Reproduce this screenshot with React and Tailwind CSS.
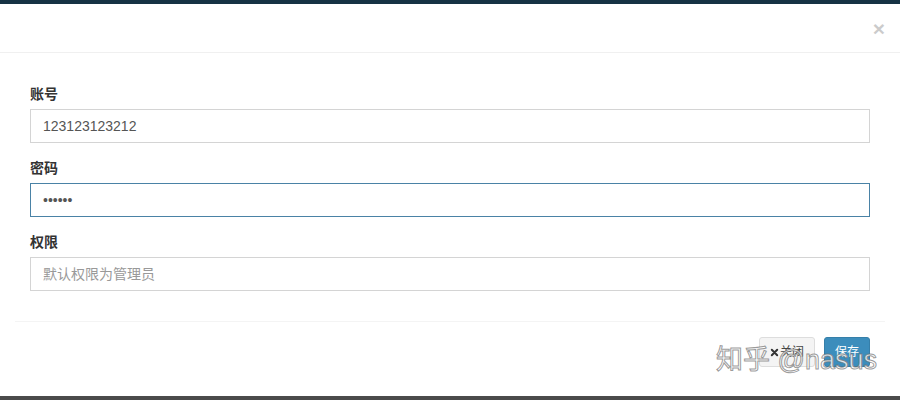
const fields = [
	{ label: "账号", type: "text", value: "123123123212" },
	{ label: "密码", type: "password", value: "123456", focused: true },
	{ label: "权限", type: "text", placeholder: "默认权限为管理员" },
];

const App = () => {
	return (
		<div
			className="relative flex h-[400px] w-[900px] flex-col bg-white text-[#333]"
			style={{ fontFamily: '"Liberation Sans", "Noto Sans CJK SC", sans-serif' }}
		>
			<div className="h-[4px] bg-[#163244]" />

			{/* header */}
			<div className="flex h-[49px] items-center justify-end border-b border-[#f0f0f0] pr-[15px]">
				<button className="text-[21px] font-bold leading-none text-black opacity-20">×</button>
			</div>

			{/* body */}
			<div className="px-[30px] pt-[31px] pb-[15px]">
				{fields.map((field) => (
					<div key={field.label} className="mb-[15px]">
						<label className="mb-[5px] block text-[14px] font-bold leading-[20px] text-[#333]">
							{field.label}
						</label>
						<input
							type={field.type}
							readOnly
							defaultValue={field.value}
							placeholder={field.placeholder}
							className={
								"block h-[34px] w-full border bg-white px-[12px] text-[14px] text-[#555] outline-none placeholder:text-[#999] " +
								(field.focused ? "border-[#4a82a6]" : "border-[#d4d4d4]")
							}
						/>
					</div>
				))}
			</div>

			{/* footer */}
			<div className="mx-[15px] flex justify-end gap-[9px] border-t border-[#f4f4f4] pt-[15px] pr-[15px]">
				<button className="flex h-[30px] items-center gap-[1px] rounded-[3px] border border-[#ddd] bg-[#f4f4f4] px-[10px] text-[12px] text-[#444]">
					<svg width="9" height="9" viewBox="0 0 10 10">
						<path d="M2 2L8 8M8 2L2 8" stroke="#333" strokeWidth="2.2" strokeLinecap="round" />
					</svg>
					关闭
				</button>
				<button className="h-[30px] rounded-[3px] border border-[#367fa9] bg-[#3c8dbc] px-[10px] text-[12px] text-white">
					保存
				</button>
			</div>

			<div className="flex-1" />
			<div className="h-[4px] bg-[#4b4b4b]" />

			{/* watermark */}
			<div className="pointer-events-none absolute left-[716px] top-[342px] whitespace-nowrap text-[27px] leading-[36px] text-white/80 [-webkit-text-stroke:1px_rgba(110,110,110,0.7)]">
				知乎 @nasus
			</div>
		</div>
	);
};

export default App;
